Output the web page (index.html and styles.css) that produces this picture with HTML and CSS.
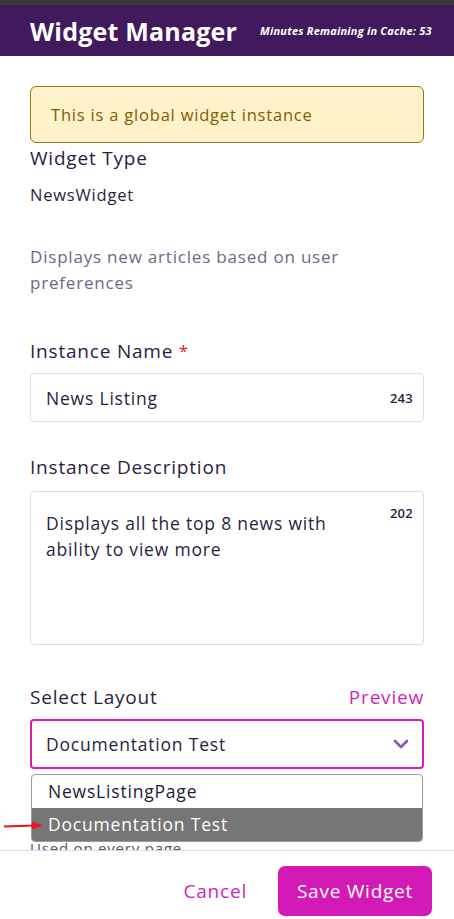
FILE: index.html
```html
<!DOCTYPE html>
<html lang="en">
<head>
  <meta charset="UTF-8">
  <meta name="viewport" content="width=device-width, initial-scale=1.0">
  <title>Widget Manager</title>
  <link rel="stylesheet" href="styles.css">
</head>
<body>
  <div class="topbar"></div>
  <header class="panel-header">
    <h1>Widget Manager</h1>
    <span class="cache-note">Minutes Remaining in Cache: 53</span>
  </header>
  <main class="panel-body">
    <div class="alert">This is a global widget instance</div>
    <div class="label first">Widget Type</div>
    <div class="type-name">NewsWidget</div>
    <p class="type-desc">Displays new articles based on user preferences</p>

    <div class="label name-label">Instance Name <span class="required">*</span></div>
    <div class="field">
      <span class="field-text">News Listing</span>
      <span class="counter">243</span>
    </div>

    <div class="label desc-label">Instance Description</div>
    <div class="field textarea">
      <span class="field-text">Displays all the top 8 news with ability to view more</span>
      <span class="counter">202</span>
    </div>

    <div class="label-row">
      <div class="label">Select Layout</div>
      <a class="preview" href="#">Preview</a>
    </div>
    <div class="select-wrap">
      <div class="select">
        <span>Documentation Test</span>
        <svg class="chevron" width="16" height="10" viewBox="0 0 16 10">
          <path d="M2 2 L8 8 L14 2" fill="none" stroke="#8a55b6" stroke-width="2.6" stroke-linecap="round" stroke-linejoin="round"/>
        </svg>
      </div>
      <ul class="options">
        <li>NewsListingPage</li>
        <li class="active">Documentation Test</li>
      </ul>
      <svg class="pointer" width="40" height="12" viewBox="0 0 40 12">
        <path d="M0 6.5 L30 5.5" stroke="#e8141c" stroke-width="2"/>
        <path d="M28 1.5 L39 5.5 L28 9.5 Z" fill="#e8141c"/>
      </svg>
    </div>
    <p class="hint">Used on every page.</p>
  </main>
  <footer class="panel-footer">
    <a class="cancel" href="#">Cancel</a>
    <button class="save" type="button">Save Widget</button>
  </footer>
</body>
</html>
```

FILE: styles.css
```css
body {
  margin: 0;
  padding: 0;
  font-family: "Open Sans", "Noto Sans", sans-serif;
  letter-spacing: 0.05em;
  color: #2b1d3f;
  background-color: #fff;
  width: 454px;
  height: 919px;
  overflow: hidden;
}
.topbar {
  height: 5px;
  background-color: #3a3a3a;
}
.panel-header {
  height: 51px;
  background-color: #401a5c;
  display: flex;
  align-items: center;
  padding: 0 20px 0 30px;
  gap: 23px;
}
.panel-header h1 {
  margin: 0;
  color: #fff;
  font-size: 25px;
  font-weight: 700;
  letter-spacing: 0.2px;
}
.cache-note {
  color: #fff;
  font-size: 11px;
  font-style: italic;
  font-weight: 700;
  letter-spacing: 0.02em;
}
.panel-body {
  height: 794px;
  overflow: hidden;
  padding: 0 30px;
}
.alert {
  margin-top: 30px;
  height: 55px;
  display: flex;
  align-items: center;
  padding-left: 20px;
  background-color: #fef2cb;
  border: 1px solid #9a7614;
  border-radius: 6px;
  color: #7e5d00;
  font-size: 16.5px;
}
.label {
  font-size: 19px;
  line-height: 24px;
  color: #2b1d3f;
}
.label.first {
  margin-top: 3px;
}
.type-name {
  margin-top: 13px;
  font-size: 16.5px;
  line-height: 24px;
}
.type-desc {
  margin: 37px 0 0;
  font-size: 17px;
  line-height: 26px;
  color: #6b6985;
  padding-right: 50px;
}
.name-label {
  margin-top: 43px;
}
.required {
  color: #f01010;
  font-size: 16px;
  vertical-align: top;
}
.field {
  margin-top: 10px;
  height: 47px;
  border: 1px solid #d3dbf5;
  border-radius: 4px;
  display: flex;
  align-items: center;
  justify-content: space-between;
  padding: 0 10px 0 15px;
  font-size: 17.5px;
}
.counter {
  font-size: 13px;
  font-weight: 600;
  letter-spacing: 0.02em;
  color: #2b1d3f;
}
.desc-label {
  margin-top: 33px;
}
.field.textarea {
  margin-top: 12px;
  align-items: flex-start;
  padding-top: 18px;
  box-sizing: border-box;
  height: 154px;
}
.field.textarea .field-text {
  width: 300px;
  line-height: 26px;
}
.field.textarea .counter {
  margin-top: -6px;
}
.label-row {
  margin-top: 40px;
  height: 24px;
  display: flex;
  justify-content: space-between;
  align-items: center;
}
.preview {
  color: #d21fbc;
  font-size: 19px;
  line-height: 24px;
  text-decoration: none;
}
.select-wrap {
  position: relative;
  margin-top: 10px;
}
.select {
  height: 46px;
  border: 2px solid #d21fbc;
  border-radius: 4px;
  display: flex;
  align-items: center;
  justify-content: space-between;
  padding: 0 13px 0 14px;
  font-size: 17.5px;
}
.options {
  position: absolute;
  top: 55px;
  left: 1px;
  right: 1px;
  margin: 0;
  padding: 0;
  list-style: none;
  background-color: #fff;
  border: 1px solid #9a9a9a;
  border-radius: 4px;
  overflow: hidden;
  z-index: 2;
}
.options li {
  height: 33px;
  line-height: 33px;
  padding-left: 16px;
  font-size: 17.5px;
  color: #241a3a;
}
.options li.active {
  background-color: #767676;
  color: #fff;
}
.pointer {
  position: absolute;
  left: -26px;
  top: 101px;
  z-index: 3;
}
.hint {
  margin: 69px 0 0;
  font-size: 15px;
  line-height: 20px;
  color: #555;
}
.panel-footer {
  border-top: 1px solid #d3dbf5;
  height: 68px;
  display: flex;
  align-items: flex-start;
  justify-content: flex-end;
  padding: 15px 22px 0 0;
  box-sizing: border-box;
  gap: 31px;
}
.cancel {
  color: #d21fbc;
  font-size: 19px;
  line-height: 50px;
  text-decoration: none;
}
.save {
  width: 154px;
  height: 50px;
  background-color: #d31ab6;
  color: #fff;
  border: none;
  border-radius: 7px;
  font-family: inherit;
  letter-spacing: 0.04em;
  font-size: 19px;
  cursor: pointer;
}
```
